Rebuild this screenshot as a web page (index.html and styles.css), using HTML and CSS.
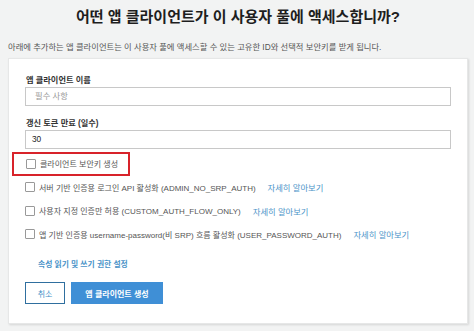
FILE: index.html
```html
<!DOCTYPE html>
<html lang="ko">
<head>
<meta charset="utf-8">
<link rel="stylesheet" href="styles.css">
</head>
<body>
<div class="page">
  <h1 class="title">어떤 앱 클라이언트가 이 사용자 풀에 액세스합니까?</h1>
  <p class="subtitle">아래에 추가하는 앱 클라이언트는 이 사용자 풀에 액세스할 수 있는 고유한 ID와 선택적 보안키를 받게 됩니다.</p>
  <div class="card">
    <div class="field">
      <label class="label">앱 클라이언트 이름</label>
      <div class="input placeholder">필수 사항</div>
    </div>
    <div class="field last">
      <label class="label">갱신 토큰 만료 (일수)</label>
      <div class="input">30</div>
    </div>
    <div class="checks">
      <div class="check highlight"><span class="box"></span><span>클라이언트 보안키 생성</span></div>
      <div class="check"><span class="box"></span><span>서버 기반 인증용 로그인 API 활성화 (ADMIN_NO_SRP_AUTH)</span><a class="link">자세히 알아보기</a></div>
      <div class="check"><span class="box"></span><span>사용자 지정 인증만 허용 (CUSTOM_AUTH_FLOW_ONLY)</span><a class="link">자세히 알아보기</a></div>
      <div class="check"><span class="box"></span><span>앱 기반 인증용 username-password(비 SRP) 흐름 활성화 (USER_PASSWORD_AUTH)</span><a class="link">자세히 알아보기</a></div>
    </div>
    <div class="attr"><a class="link">속성 읽기 및 쓰기 권한 설정</a></div>
    <div class="buttons">
      <button class="btn cancel">취소</button>
      <button class="btn primary">앱 클라이언트 생성</button>
    </div>
  </div>
</div>
</body>
</html>
```
FILE: styles.css
```css
* { box-sizing: border-box; }
html, body { margin: 0; padding: 0; }
body {
  background: #f2f3f3;
  font-family: "Liberation Sans", "Noto Sans CJK KR", sans-serif;
  color: #333;
  width: 474px;
  height: 331px;
  overflow: hidden;
}
.page { padding: 5px 6px 0 8px; }
.title {
  margin: 0;
  text-align: center;
  font-size: 15px;
  font-weight: bold;
  color: #1e1e1e;
  line-height: 24px;
}
.subtitle {
  margin: 12px 0 0 0;
  font-size: 8.3px;
  color: #555;
  line-height: 12px;
}
.card {
  margin-top: 5px;
  width: 460px;
  height: 266px;
  background: #fff;
  border: 1px solid #e6e7e7;
  box-shadow: 1px 1px 2px rgba(0,0,0,0.12);
  padding: 16px 16px 0 16px;
}
.field { display: flex; flex-direction: column; margin-bottom: 12px; }
.field.last { margin-bottom: 3px; }
.label {
  font-size: 8.2px;
  font-weight: bold;
  color: #333;
  line-height: 11px;
  margin-bottom: 1px;
  padding-left: 1px;
}
.input {
  width: 426px;
  height: 19px;
  border: 1px solid #c8c8c8;
  font-size: 8.3px;
  line-height: 17px;
  padding-left: 6px;
  color: #222;
}
.input.placeholder { color: #999; padding-left: 9px; }
.checks { display: flex; flex-direction: column; }
.check {
  display: flex;
  align-items: center;
  height: 23.5px;
  font-size: 8px;
  color: #555;
  white-space: nowrap;
}
.check.highlight {
  width: 118px;
  margin-left: -13px;
  padding-left: 12px;
  border: 2.5px solid #d8232a;
}
.box {
  width: 10px;
  height: 10px;
  border: 1px solid #999;
  border-radius: 1px;
  margin-right: 4px;
  flex: none;
  background: #fff;
}
.link {
  color: #4a93c8;
  font-size: 8.3px;
  margin-left: 12px;
}
.attr { margin-top: 10px; padding-left: 13px; line-height: 12px; }
.attr .link { margin-left: 0; font-weight: bold; font-size: 7.8px; }
.buttons { margin-top: 11px; display: flex; gap: 6px; }
.btn {
  height: 22px;
  font-family: inherit;
  font-size: 8px;
  border: 1px solid #2f6f9f;
  padding: 0;
}
.cancel { width: 40px; background: #fff; color: #3f8fc7; }
.primary { width: 92px; background: #3f8fd6; color: #fff; border-color: #3f8fd6; font-weight: bold; }
```
